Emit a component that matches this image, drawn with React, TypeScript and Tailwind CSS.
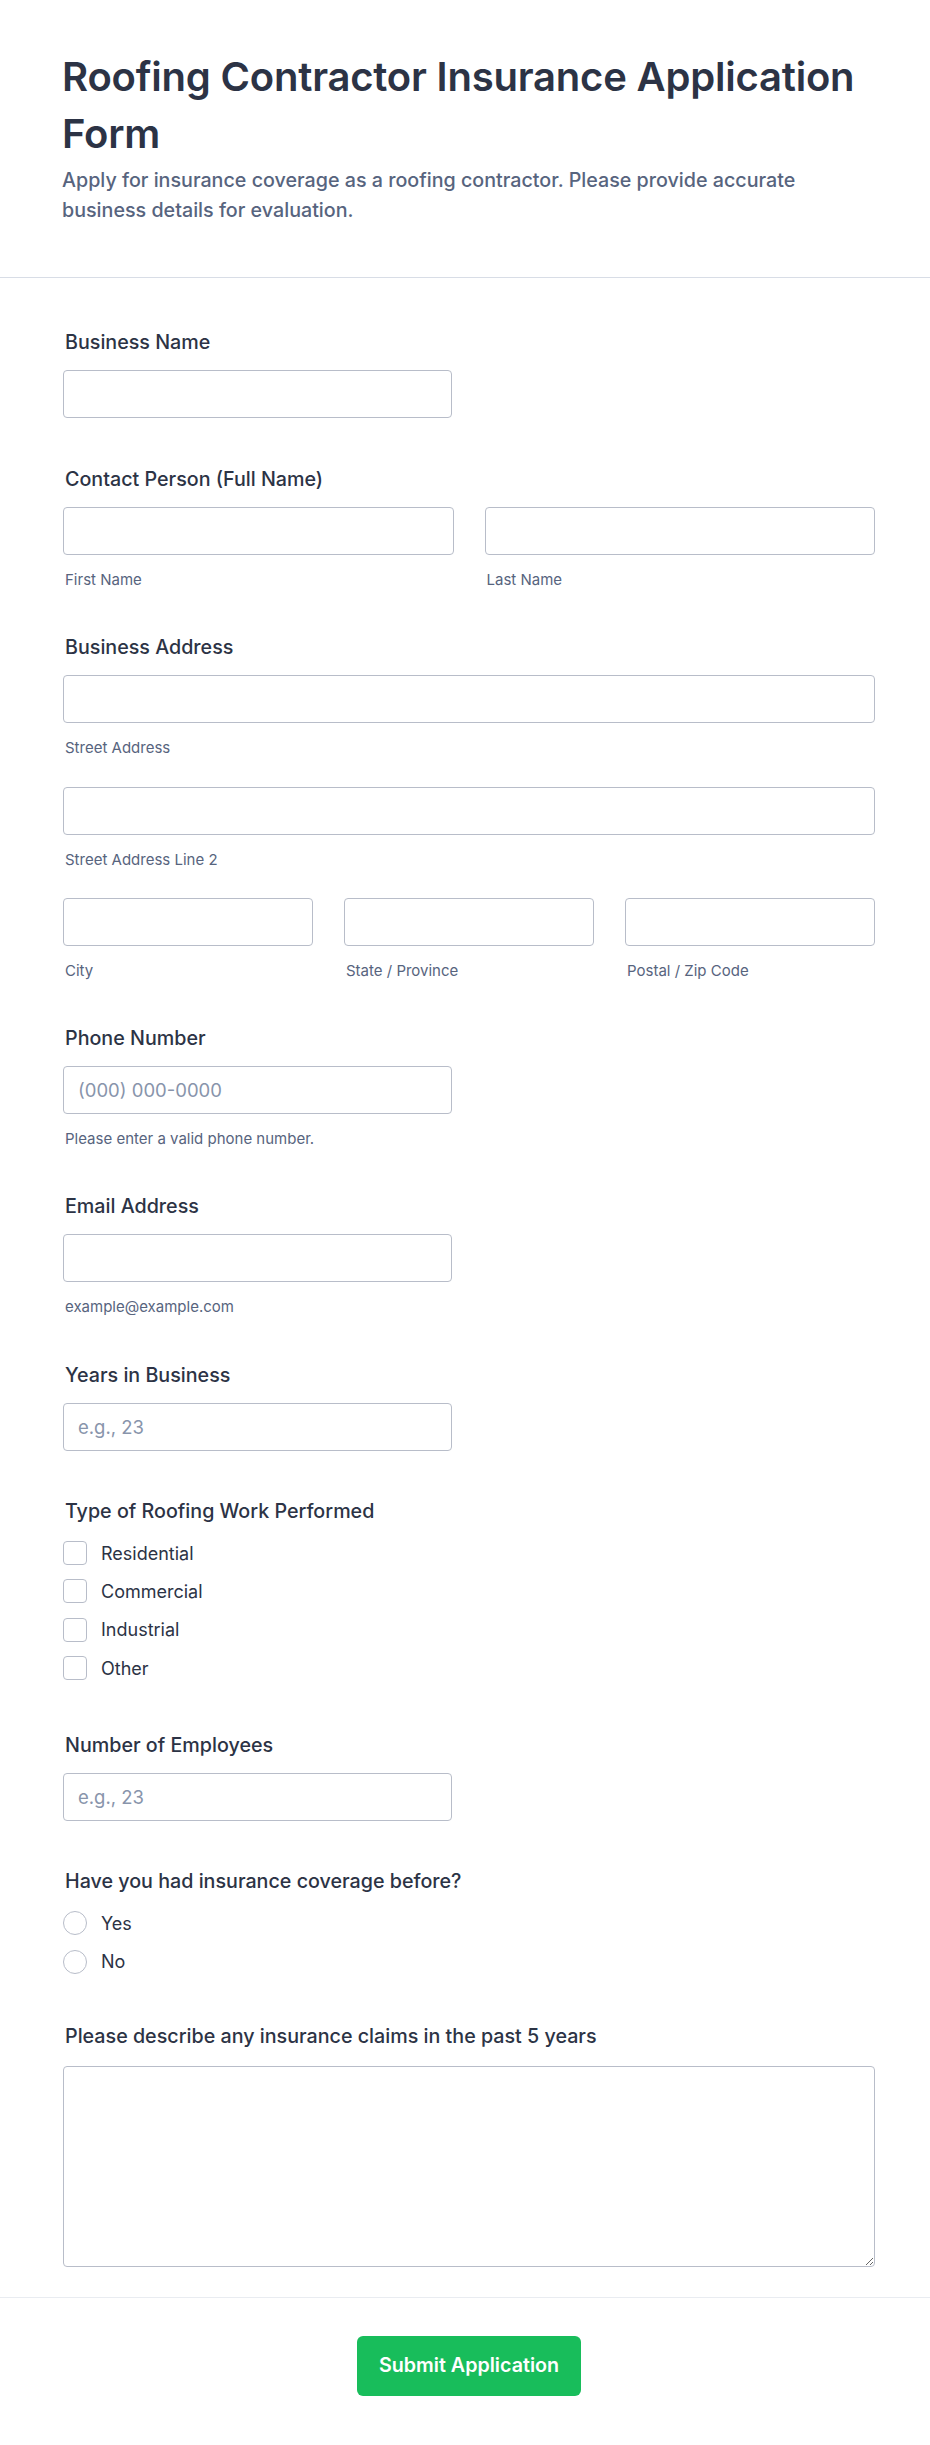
import React from 'react';

const font = { fontFamily: 'Inter, "Noto Sans", sans-serif' };

const Label: React.FC<{ children: React.ReactNode }> = ({ children }) => (
  <label className="block text-[19.7px] leading-[28px] font-medium text-[#2c3345] pl-[2px]">{children}</label>
);

const Sub: React.FC<{ children: React.ReactNode }> = ({ children }) => (
  <div className="mt-[15px] text-[15px] leading-[20px] text-[#57647e] pl-[2px]">{children}</div>
);

const Input: React.FC<{ placeholder?: string; className?: string }> = ({ placeholder, className = '' }) => (
  <input
    type="text"
    placeholder={placeholder}
    className={`block h-[48px] border border-[#b8bdc9] rounded-[4px] bg-white px-[14px] text-[18.5px] text-[#2c3345] placeholder:text-[#8894ab] outline-none ${className}`}
  />
);

const Checkbox: React.FC<{ label: string }> = ({ label }) => (
  <label className="flex items-center h-[28px] gap-[14px] text-[18px] text-[#2c3345]">
    <span className="w-[24px] h-[24px] border border-[#b8bdc9] rounded-[4px] bg-white shrink-0" />
    {label}
  </label>
);

const Radio: React.FC<{ label: string }> = ({ label }) => (
  <label className="flex items-center h-[28px] gap-[14px] text-[18px] text-[#2c3345]">
    <span className="w-[24px] h-[24px] border border-[#b8bdc9] rounded-full bg-white shrink-0" />
    {label}
  </label>
);

export default function App() {
  return (
    <div className="bg-white min-h-screen" style={font}>
      {/* Header */}
      <header className="pl-[62px] pr-[55px] pt-[48px] pb-[52px] border-b border-[#d8dde6]">
        <h1 className="text-[40px] leading-[57px] font-semibold text-[#2c3345] tracking-[-0.2px]">
          Roofing Contractor Insurance Application Form
        </h1>
        <p className="mt-[3px] text-[19.7px] leading-[30px] font-medium text-[#57647e]">
          Apply for insurance coverage as a roofing contractor. Please provide accurate business details for evaluation.
        </p>
      </header>

      {/* Form fields */}
      <form className="pl-[63px] pr-[55px] pt-[50px] pb-[30px]" onSubmit={(e) => e.preventDefault()}>
        <div>
          <Label>Business Name</Label>
          <Input className="mt-[14px] w-[389px]" />
        </div>

        <div className="mt-[47px]">
          <Label>Contact Person (Full Name)</Label>
          <div className="mt-[14px] grid grid-cols-2 gap-[31px]">
            <div>
              <Input className="w-full" />
              <Sub>First Name</Sub>
            </div>
            <div>
              <Input className="w-full" />
              <Sub>Last Name</Sub>
            </div>
          </div>
        </div>

        <div className="mt-[43px]">
          <Label>Business Address</Label>
          <Input className="mt-[14px] w-full" />
          <Sub>Street Address</Sub>
          <Input className="mt-[29px] w-full" />
          <Sub>Street Address Line 2</Sub>
          <div className="mt-[28px] grid grid-cols-3 gap-[31px]">
            <div>
              <Input className="w-full" />
              <Sub>City</Sub>
            </div>
            <div>
              <Input className="w-full" />
              <Sub>State / Province</Sub>
            </div>
            <div>
              <Input className="w-full" />
              <Sub>Postal / Zip Code</Sub>
            </div>
          </div>
        </div>

        <div className="mt-[43px]">
          <Label>Phone Number</Label>
          <Input className="mt-[14px] w-[389px]" placeholder="(000) 000-0000" />
          <Sub>Please enter a valid phone number.</Sub>
        </div>

        <div className="mt-[43px]">
          <Label>Email Address</Label>
          <Input className="mt-[14px] w-[389px]" />
          <Sub>example@example.com</Sub>
        </div>

        <div className="mt-[44px]">
          <Label>Years in Business</Label>
          <Input className="mt-[14px] w-[389px]" placeholder="e.g., 23" />
        </div>

        <div className="mt-[46px]">
          <Label>Type of Roofing Work Performed</Label>
          <div className="mt-[14px] flex flex-col gap-[10.4px]">
            <Checkbox label="Residential" />
            <Checkbox label="Commercial" />
            <Checkbox label="Industrial" />
            <Checkbox label="Other" />
          </div>
        </div>

        <div className="mt-[49px]">
          <Label>Number of Employees</Label>
          <Input className="mt-[14px] w-[389px]" placeholder="e.g., 23" />
        </div>

        <div className="mt-[46px]">
          <Label>Have you had insurance coverage before?</Label>
          <div className="mt-[14px] flex flex-col gap-[10.5px]">
            <Radio label="Yes" />
            <Radio label="No" />
          </div>
        </div>

        <div className="mt-[46px]">
          <Label>Please describe any insurance claims in the past 5 years</Label>
          <textarea className="mt-[16px] block w-full h-[201px] border border-[#b8bdc9] rounded-[4px] bg-white px-[14px] py-[10px] text-[18px] text-[#2c3345] outline-none" />
        </div>
      </form>

      {/* Footer */}
      <div className="border-t border-[#e9ecf1] pl-[63px] pr-[55px] pt-[38px] pb-[48px] flex justify-center">
        <button
          type="button"
          className="h-[60px] px-[22px] rounded-[6px] bg-[#18bd5b] text-white text-[19.7px] font-semibold"
        >
          Submit Application
        </button>
      </div>
    </div>
  );
}
